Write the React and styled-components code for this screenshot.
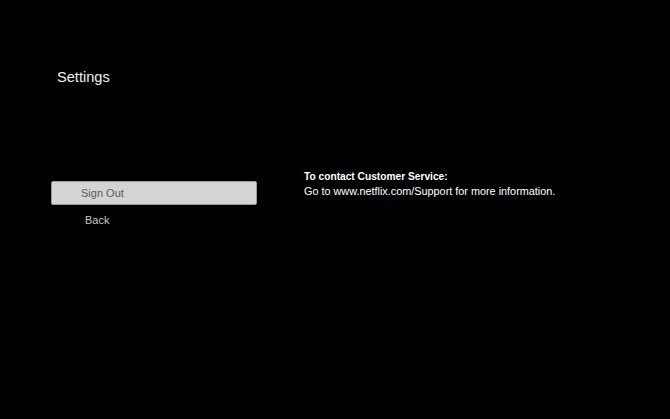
import React from "react";
import styled, { createGlobalStyle } from "styled-components";

const GlobalStyle = createGlobalStyle`
  html, body {
    margin: 0;
    padding: 0;
    background: #000;
  }
  body {
    font-family: "Liberation Sans", Arial, sans-serif;
  }
`;

const menu = [
  { label: "Sign Out", focused: true },
  { label: "Back", focused: false },
];

export default function App() {
  return (
    <>
      <GlobalStyle />
      <Page>
        <Title>Settings</Title>
        <Main>
          <Menu>
            {menu.map((item) => (
              <MenuItem key={item.label} $focused={item.focused}>
                {item.label}
              </MenuItem>
            ))}
          </Menu>
          <Info>
            <InfoHeading>To contact Customer Service:</InfoHeading>
            <InfoText>Go to www.netflix.com/Support for more information.</InfoText>
          </Info>
        </Main>
      </Page>
    </>
  );
}

const Page = styled.div`
  width: 670px;
  height: 419px;
  background: #000;
  box-sizing: border-box;
  padding: 68px 0 0 51px;
  overflow: hidden;
`;

const Title = styled.h1`
  margin: 0 0 0 6px;
  font-size: 14.6px;
  font-weight: 400;
  color: #f2f2f2;
  line-height: 18px;
`;

const Main = styled.div`
  display: flex;
  align-items: flex-start;
  gap: 47px;
  margin-top: 77px;
`;

const Menu = styled.div`
  display: flex;
  flex-direction: column;
  gap: 3px;
  width: 206px;
  margin-top: 18px;
`;

const MenuItem = styled.div`
  box-sizing: border-box;
  height: 24px;
  display: flex;
  align-items: center;
  padding-left: ${(p) => (p.$focused ? "29px" : "33px")};
  font-size: 11px;
  border-radius: 2px;
  color: ${(p) => (p.$focused ? "#5a5a5a" : "#c8c8c8")};
  background: ${(p) => (p.$focused ? "#d4d4d4" : "transparent")};
  border: 1px solid ${(p) => (p.$focused ? "#9a9a9a" : "transparent")};
`;

const Info = styled.div`
  display: flex;
  flex-direction: column;
  gap: 2px;
  margin-top: 8px;
  color: #fff;
  line-height: 12px;
`;

const InfoHeading = styled.div`
  font-size: 10.2px;
  font-weight: 700;
`;

const InfoText = styled.div`
  font-size: 10.85px;
  font-weight: 400;
`;
